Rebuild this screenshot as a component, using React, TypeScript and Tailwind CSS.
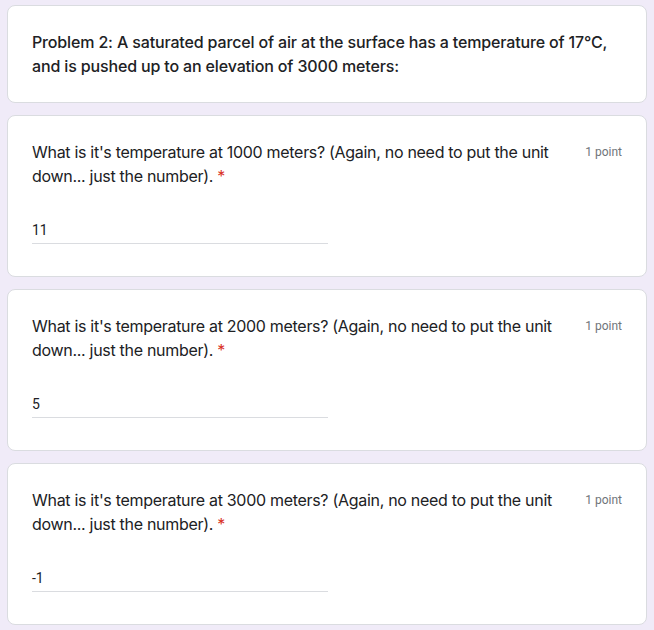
import React from "react";

const Q = ({ n, v }: { n: string; v: string }) => (
  <div className="bg-white border border-[#dadce0] rounded-[8px] px-6 pt-6 pb-[32px]">
    <div className="flex items-start">
      <div className="flex-1 text-[16px] leading-[24px] text-[#202124] font-['Inter',sans-serif] tracking-[-0.3px] whitespace-nowrap">
        <div>What is it's temperature at {n} meters? (Again, no need to put the unit</div>
        <div>
          down... just the number). <span className="text-[#d93025]">*</span>
        </div>
      </div>
      <div className="pl-6 pt-[2px] text-[12px] leading-[20px] text-[#70757a] font-['Roboto',sans-serif] whitespace-nowrap">
        1 point
      </div>
    </div>
    <div className="mt-[32px] w-[296px] border-b border-[#dadce0] pb-[3px]">
      <div className="text-[14px] leading-[20px] text-[#202124] font-['Roboto',sans-serif]">{v}</div>
    </div>
  </div>
);

export default function App() {
  return (
    <div className="min-h-[630px] bg-[#f0ebf8] px-[7px] pt-[5px] pb-[5px] flex flex-col gap-[12px]">
      <div className="bg-white border border-[#dadce0] rounded-[8px] px-6 py-6 text-[16px] leading-[24px] text-[#202124] font-['Inter',sans-serif] font-medium tracking-[-0.15px] whitespace-nowrap">
        <div>Problem 2: A saturated parcel of air at the surface has a temperature of 17°C,</div>
        <div>and is pushed up to an elevation of 3000 meters:</div>
      </div>
      <Q n="1000" v="11" />
      <Q n="2000" v="5" />
      <Q n="3000" v="-1" />
    </div>
  );
}
